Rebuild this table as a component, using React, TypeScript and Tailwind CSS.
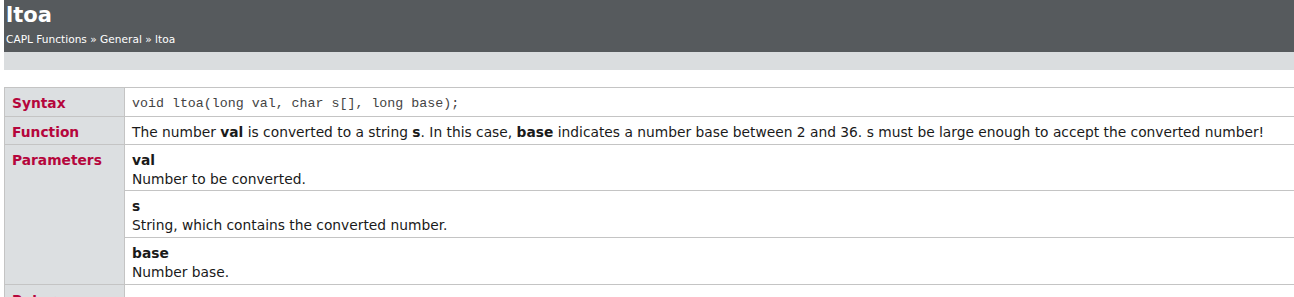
const sans = "font-['Verdana','DejaVu_Sans',sans-serif]";

const params = [
  { name: "val", desc: "Number to be converted." },
  { name: "s", desc: "String, which contains the converted number." },
  { name: "base", desc: "Number base." },
];

function Row({ label, children }: { label: string; children?: React.ReactNode }) {
  return (
    <div className="flex border-b border-[#c4c4c4]">
      <div className="w-[120px] shrink-0 border-r border-[#c4c4c4] bg-[#dcdfe1] px-[7px] pt-[6px] pb-[2px] text-[13.8px] leading-[19px] font-bold text-[#b5063c]">
        {label}
      </div>
      <div className="flex-1">{children}</div>
    </div>
  );
}

export default function App() {
  return (
    <div className={`h-[297px] w-full overflow-hidden bg-white pl-[4px] ${sans}`}>
      {/* Page header */}
      <div className="h-[52px] bg-[#565a5d] px-[2px] pt-[2px] text-white">
        <h1 className="text-[21px] leading-[26px] font-bold">ltoa</h1>
        <div className="mt-[4px] text-[10.6px] leading-[14px]">
          CAPL Functions » General » ltoa
        </div>
      </div>
      <div className="h-[18px] bg-[#dadddf]" />

      {/* Function table */}
      <div className="mt-[17px] mr-[-4px] border-t border-l border-[#c4c4c4] text-[13.8px] text-[#1a1a1a]">
        <Row label="Syntax">
          <div className="px-[7px] pt-[6px] pb-[2px] font-['Liberation_Mono','Courier_New',monospace] text-[13.3px] leading-[20px] text-[#444]">
            void ltoa(long val, char s[], long base);
          </div>
        </Row>
        <Row label="Function">
          <div className="px-[7px] pt-[5px] pb-[1px] leading-[21px]">
            The number <b>val</b> is converted to a string <b>s</b>. In this case,{" "}
            <b>base</b> indicates a number base between 2 and 36. s must be large enough to
            accept the converted number!
          </div>
        </Row>
        <Row label="Parameters">
          {params.map((p, i) => (
            <div
              key={p.name}
              className={`px-[7px] pt-[6px] leading-[19px] ${i === 0 ? "pb-[1px]" : "pb-[2px]"} ${i < params.length - 1 ? "border-b border-[#c4c4c4]" : ""}`}
            >
              <div className="font-bold">{p.name}</div>
              <div>{p.desc}</div>
            </div>
          ))}
        </Row>
        <Row label="Return Values" />
      </div>
    </div>
  );
}
